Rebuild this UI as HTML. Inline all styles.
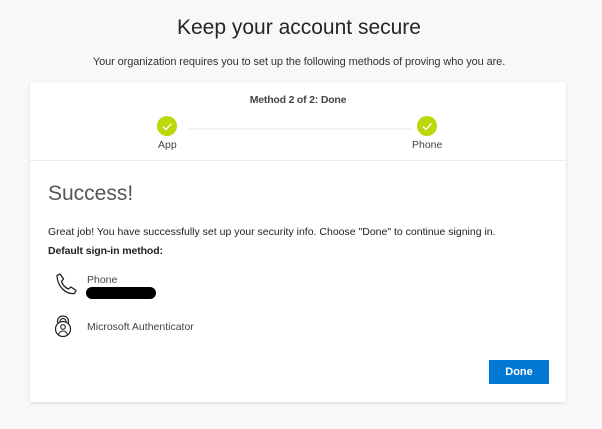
<!DOCTYPE html>
<html><head><style>
body{margin:0;width:602px;height:429px;background:#f8f8f8;font-family:"Liberation Sans",sans-serif;color:#323130;position:relative;overflow:hidden}
.a{position:absolute;white-space:nowrap}
.card{position:absolute;left:30px;top:82px;width:536px;height:320px;background:#fff;box-shadow:0 1px 3px rgba(0,0,0,.12)}
.c{position:absolute;width:20px;height:20px;border-radius:50%;background:#bad80a}
</style></head><body>
<div class="a" style="left:0;width:598px;text-align:center;top:16px;font-size:21px;color:#262626">Keep your account secure</div>
<div class="a" style="left:0;width:598px;text-align:center;top:56px;font-size:11px;letter-spacing:-0.1px;color:#333">Your organization requires you to set up the following methods of proving who you are.</div>
<div class="card">
  <div class="a" style="left:0;width:536px;text-align:center;top:12px;font-size:10.5px;font-weight:bold;color:#444;letter-spacing:-0.2px">Method 2 of 2: Done</div>
  <div class="a" style="left:157px;top:46px;width:226px;height:2px;background:#f2f2f2"></div>
  <div class="c" style="left:127px;top:34px"><svg width="20" height="20"><path d="M6 10.5l3 3 5.5-6" stroke="#fff" stroke-width="1.3" fill="none"/></svg></div>
  <div class="c" style="left:387px;top:34px"><svg width="20" height="20"><path d="M6 10.5l3 3 5.5-6" stroke="#fff" stroke-width="1.3" fill="none"/></svg></div>
  <div class="a" style="left:128px;top:57px;font-size:10.5px;color:#444">App</div>
  <div class="a" style="left:382px;top:57px;font-size:10.5px;color:#444">Phone</div>
  <div class="a" style="left:0;top:78px;width:536px;height:1px;background:#ebebeb"></div>
  <div class="a" style="left:18px;top:100px;font-size:21px;color:#555">Success!</div>
  <div class="a" style="left:18px;top:144px;font-size:10.5px;letter-spacing:0px;color:#222">Great job! You have successfully set up your security info. Choose "Done" to continue signing in.</div>
  <div class="a" style="left:18px;top:163px;font-size:10.5px;font-weight:bold;color:#222;letter-spacing:-0.1px">Default sign-in method:</div>
  <svg class="a" style="left:22px;top:190px" width="26" height="26" viewBox="0 0 26 26"><path d="M5 3.5l3-1.5 3.5 5-2 2.5c1 3 3.5 6 7 7.5l2.5-2 5 3.5-1.5 3c-9 1-17-7-17.5-18z" fill="none" stroke="#222" stroke-width="1.3" stroke-linejoin="round"/></svg>
  <div class="a" style="left:57px;top:192px;font-size:10.5px;color:#444">Phone</div>
  <div class="a" style="left:56px;top:205px;width:70px;height:12px;border-radius:6px;background:#000"></div>
  <svg class="a" style="left:22px;top:232px" width="22" height="26" viewBox="0 0 22 26"><path d="M11 2c-3.5 0-5.5 2.5-5.5 5.5v1.5M11 2c3.5 0 5.5 2.5 5.5 5.5v1.5M8 8.5v-1a3 3 0 016 0v1" fill="none" stroke="#222" stroke-width="1.2"/><circle cx="11" cy="15" r="7.5" fill="none" stroke="#222" stroke-width="1.2"/><circle cx="11" cy="13" r="2.3" fill="none" stroke="#222" stroke-width="1.1"/><path d="M6.5 20.5c1-2.5 2.5-3.5 4.5-3.5s3.5 1 4.5 3.5" fill="none" stroke="#222" stroke-width="1.1"/></svg>
  <div class="a" style="left:57px;top:239px;font-size:10.5px;color:#444">Microsoft Authenticator</div>
  <div class="a" style="left:459px;top:278px;width:60px;height:24px;background:#0078d4;color:#fff;font-size:11px;font-weight:bold;text-align:center;line-height:24px">Done</div>
</div>
</body></html>
